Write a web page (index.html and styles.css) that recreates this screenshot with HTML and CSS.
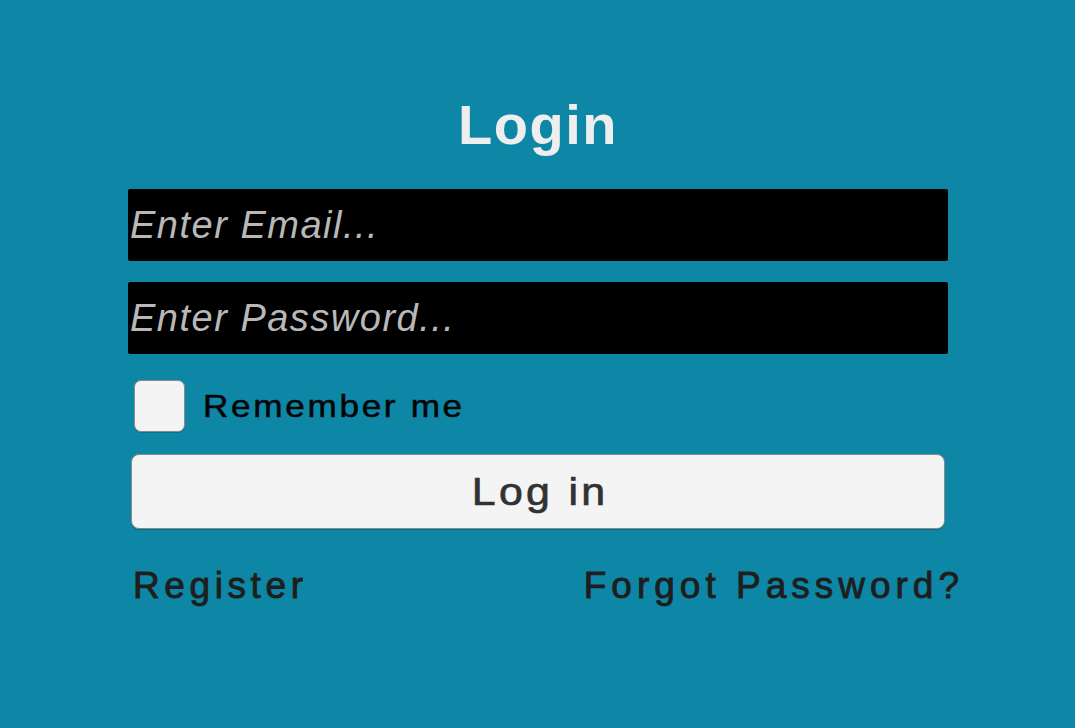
FILE: index.html
```html
<!DOCTYPE html>
<html lang="en">

<head>
  <meta charset="UTF-8">
  <meta name="viewport" content="width=device-width, initial-scale=1.0">
  <title>Login</title>
  <link rel="stylesheet" href="styles.css">
</head>

<body>
  <div class="login-panel">
    <h1>Login</h1>
    <form class="login-form" onsubmit="return false">
      <input type="email" class="field" placeholder="Enter Email...">
      <input type="password" class="field" placeholder="Enter Password...">
      <label class="remember">
        <input type="checkbox" class="check">
        <span class="wide">Remember me</span>
      </label>
      <button type="submit" class="login-btn"><span class="wide">Log in</span></button>
    </form>
    <div class="links">
      <a href="#">Register</a>
      <a href="#" class="forgot">Forgot Password?</a>
    </div>
  </div>
</body>

</html>
```

FILE: styles.css
```css
* {
  box-sizing: border-box;
  margin: 0;
  padding: 0;
  font-family: 'Liberation Sans', Arial, sans-serif;
}

body {
  height: 100vh;
  background: #0d87a5;
  overflow: hidden;
}

.login-panel {
  width: 820px;
  margin: 93px 0 0 128px;
  display: flex;
  flex-direction: column;
}

.login-panel h1 {
  font-size: 56px;
  line-height: 64px;
  font-weight: bold;
  letter-spacing: 1.5px;
  text-align: center;
  color: #eeeeee;
  margin-bottom: 32px;
}

/* ui text is drawn slightly stretched sideways */
.wide {
  display: inline-block;
  transform: scaleX(1.1);
  transform-origin: left center;
}

.login-form {
  display: flex;
  flex-direction: column;
}

.field {
  height: 72px;
  width: 100%;
  border: none;
  border-radius: 2px;
  background: #000;
  color: #ddd;
  padding: 0 2px;
  font-size: 38px;
  letter-spacing: 1.5px;
  outline: none;
}

.field + .field {
  margin-top: 21px;
}

.field::placeholder {
  color: #b8b8b8;
  font-style: italic;
}

.remember {
  display: flex;
  align-items: center;
  gap: 18px;
  margin: 26px 0 0 6px;
  height: 52px;
  font-size: 32px;
  letter-spacing: 2.4px;
  color: #050505;
  -webkit-text-stroke: 0.5px #050505;
}

.check {
  appearance: none;
  width: 51px;
  height: 52px;
  background: #f4f4f4;
  border: 1px solid #8a8a8a;
  border-radius: 7px;
  box-shadow: 0 1px 0 rgba(0, 0, 0, 0.15);
}

.login-btn {
  height: 75px;
  margin: 22px 3px 0;
  background: #f4f4f4;
  border: 1px solid #8a8a8a;
  border-radius: 8px;
  box-shadow: 0 1px 0 rgba(0, 0, 0, 0.2);
  color: #323232;
  font-size: 39px;
  letter-spacing: 3px;
  padding-left: 4px;
  -webkit-text-stroke: 0.7px #323232;
  cursor: pointer;
}

.login-btn .wide {
  transform-origin: center;
}

.links {
  display: flex;
  justify-content: space-between;
  margin: 35px -12px 0 5px;
  line-height: 44px;
}

.links a {
  font-size: 37px;
  letter-spacing: 4.6px;
  color: #1e1e1e;
  -webkit-text-stroke: 0.9px #1e1e1e;
  text-decoration: none;
}

.links .forgot {
  letter-spacing: 5px;
  margin-right: -4px;
}
```
